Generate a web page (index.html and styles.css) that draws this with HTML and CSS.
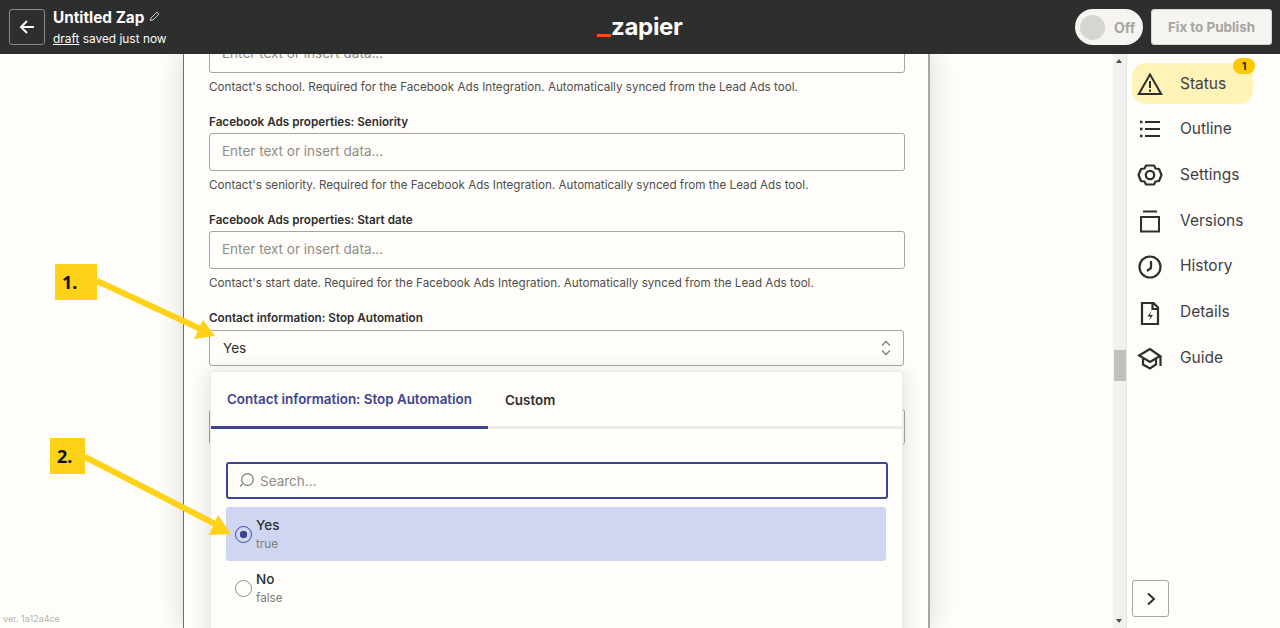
FILE: index.html
```html
<!DOCTYPE html>
<html lang="en">
  <head>
    <meta charset="UTF-8" />
    <meta name="viewport" content="width=device-width, initial-scale=1.0" />
    <title>Untitled Zap</title>
    <link rel="stylesheet" href="styles.css">
  </head>

  <body>
    <header class="topbar">
      <div class="topbar-left">
        <button class="back-btn">
          <svg width="18" height="18" viewBox="0 0 18 18" fill="none" stroke="#fffdf9" stroke-width="2"><path d="M16 9H3M9 3L3 9l6 6"/></svg>
        </button>
        <div class="zap-name">
          <div class="zap-title">Untitled Zap
            <svg width="12" height="12" viewBox="0 0 12 12" fill="none" stroke="#c9c7c2" stroke-width="1"><path d="M2 8l6-6 2 2-6 6-2.6.6z"/></svg>
          </div>
          <div class="zap-status"><u>draft</u> saved just now</div>
        </div>
      </div>
      <div class="logo"><span class="logo-bar"></span><span class="logo-text">zapier</span></div>
      <div class="topbar-right">
        <div class="toggle"><span class="knob"></span><span>Off</span></div>
        <button class="publish-btn">Fix to Publish</button>
      </div>
    </header>

    <main class="main">
      <div class="canvas">
        <section class="panel">
          <div class="fields">
            <div class="field">
              <div class="input placeholder">Enter text or insert data...</div>
              <p class="help">Contact's school. Required for the Facebook Ads Integration. Automatically synced from the Lead Ads tool.</p>
            </div>
            <div class="field">
              <label>Facebook Ads properties: Seniority</label>
              <div class="input placeholder">Enter text or insert data...</div>
              <p class="help">Contact's seniority. Required for the Facebook Ads Integration. Automatically synced from the Lead Ads tool.</p>
            </div>
            <div class="field">
              <label>Facebook Ads properties: Start date</label>
              <div class="input placeholder">Enter text or insert data...</div>
              <p class="help">Contact's start date. Required for the Facebook Ads Integration. Automatically synced from the Lead Ads tool.</p>
            </div>
            <div class="field select-field">
              <label>Contact information: Stop Automation</label>
              <div class="select">
                <span>Yes</span>
                <svg width="12" height="18" viewBox="0 0 12 18" fill="none" stroke="#8f8d88" stroke-width="1.6"><path d="M2 6.500l4-4 4 4M2 11.500l4 4 4-4"/></svg>
              </div>
            </div>
            <div class="input hidden-input"></div>
          </div>

          <div class="popover">
            <div class="tabs">
              <div class="tab active">Contact information: Stop Automation</div>
              <div class="tab">Custom</div>
            </div>
            <div class="popover-body">
              <div class="search">
                <svg width="20" height="20" viewBox="0 0 20 20" fill="none" stroke="#7d7b76" stroke-width="1.2"><circle cx="11.500" cy="8.500" r="5.800"/><path d="M6.500 13l-2.500 2.500"/></svg>
                <span>Search...</span>
              </div>
              <div class="option selected">
                <span class="radio"></span>
                <div><div class="option-name">Yes</div><div class="option-value">true</div></div>
              </div>
              <div class="option">
                <span class="radio"></span>
                <div><div class="option-name">No</div><div class="option-value">false</div></div>
              </div>
            </div>
          </div>
        </section>

        <div class="callout callout-one">1.</div>
        <div class="callout callout-two">2.</div>
        <svg class="arrows" width="1113" height="574" viewBox="0 54 1113 574" fill="#ffd21a">
          <path d="M97 281L205 331" stroke="#ffd21a" stroke-width="6"/>
          <path d="M203 320L215 336 194 339z"/>
          <path d="M85 457L221 527" stroke="#ffd21a" stroke-width="6"/>
          <path d="M218 515L231 534 209 535z"/>
        </svg>
        <span class="version">ver. 1a12a4ce</span>
      </div>

      <div class="scrollbar">
        <span class="arrow-up"></span>
        <span class="thumb"></span>
        <span class="arrow-down"></span>
      </div>

      <nav class="sidebar">
        <a class="nav-item status">
          <svg width="26" height="26" viewBox="0 0 26 26" fill="none" stroke="#2d2e2e" stroke-width="2"><path d="M13 3.500L1.800 23h22.400zM13 10v7M13 18.500v2.200"/></svg>
          <span>Status</span>
          <b class="badge">1</b>
        </a>
        <a class="nav-item">
          <svg width="26" height="26" viewBox="0 0 26 26" fill="none" stroke="#2d2e2e" stroke-width="2.200"><path d="M8 6h15M8 13h15M8 20h15"/><path d="M3 6h2.500M3 13h2.500M3 20h2.500" stroke-width="2.600"/></svg>
          <span>Outline</span>
        </a>
        <a class="nav-item">
          <svg width="26" height="26" viewBox="0 0 26 26" fill="none" stroke="#2d2e2e" stroke-width="2.200"><path d="M9 3.500h8l1.500 3 3.500.5 2.500 6-2.500 6-3.500.5-1.500 3H9l-1.500-3-3.500-.5L1.500 13 4 7l3.500-.5z" stroke-linejoin="round"/><circle cx="13" cy="13" r="4.200"/></svg>
          <span>Settings</span>
        </a>
        <a class="nav-item">
          <svg width="26" height="26" viewBox="0 0 26 26" fill="none" stroke="#2d2e2e" stroke-width="2"><path d="M6 3.500h14M3 9h20M4 9v15M22 9v15M3 23.500h20"/></svg>
          <span>Versions</span>
        </a>
        <a class="nav-item">
          <svg width="26" height="26" viewBox="0 0 26 26" fill="none" stroke="#2d2e2e" stroke-width="2.200"><circle cx="13" cy="13" r="10.500"/><path d="M14 7v7l-4 3"/></svg>
          <span>History</span>
        </a>
        <a class="nav-item">
          <svg width="26" height="26" viewBox="0 0 26 26" fill="none" stroke="#2d2e2e" stroke-width="2.200"><path d="M16.500 3H5v21h16V7.500zM15.500 3v6H21"/><path d="M14.500 11l-4 5.500h3l-1.500 4 4-5.500h-3z" fill="#2d2e2e" stroke="none"/></svg>
          <span>Details</span>
        </a>
        <a class="nav-item">
          <svg width="26" height="26" viewBox="0 0 26 26" fill="none" stroke="#2d2e2e" stroke-width="2.200"><path d="M13 4L2 10.500 13 17l10-6-10-7zM6 14v5.500l7 4 6-4V14M23.500 11v10"/></svg>
          <span>Guide</span>
        </a>
        <button class="collapse-btn">
          <svg width="14" height="14" viewBox="0 0 14 14" fill="none" stroke="#2d2e2e" stroke-width="2"><path d="M4 1.500L10 7l-6 5.500"/></svg>
        </button>
      </nav>
    </main>
  </body>
</html>
```

FILE: styles.css
```css
* {
  box-sizing: border-box;
}
html,
body {
  margin: 0;
  height: 100%;
  overflow: hidden;
}
body {
  font-family: Inter, "Liberation Sans", sans-serif;
  background-color: #fffdf9;
  color: #2d2e2e;
}
button {
  font-family: inherit;
  padding: 0;
}

/* top bar */
.topbar {
  height: 54px;
  display: grid;
  grid-template-columns: 1fr auto 1fr;
  align-items: center;
  padding: 0 8px 0 9px;
  background-color: #2d2e2e;
  color: #fffdf9;
}
.topbar-left {
  display: flex;
  align-items: center;
  gap: 8px;
}
.back-btn {
  width: 36px;
  height: 36px;
  display: flex;
  justify-content: center;
  align-items: center;
  background: none;
  border: 1.500px solid #8a8987;
  border-radius: 3px;
}
.zap-title {
  font-size: 15.300px;
  font-weight: 700;
  line-height: 20px;
  padding-top: 1px;
  display: flex;
  align-items: center;
  gap: 5px;
}
.zap-title svg {
  margin-bottom: 3px;
}
.zap-status {
  font-size: 11.900px;
  line-height: 18px;
  margin-top: 2px;
}
.logo {
  display: flex;
  align-items: flex-end;
  width: 87px;
  height: 30px;
}
.logo-bar {
  width: 14px;
  height: 3px;
  margin-bottom: 5px;
  background-color: #ff4f00;
}
.logo-text {
  font-size: 24px;
  font-weight: 700;
  line-height: 30px;
  letter-spacing: -0.3px;
}
.topbar-right {
  display: flex;
  justify-content: flex-end;
  gap: 8px;
}
.toggle {
  width: 68px;
  height: 36px;
  display: flex;
  align-items: center;
  gap: 9px;
  padding-left: 5px;
  border-radius: 18px;
  background-color: #f5f4f1;
  color: #a8a59f;
  font-size: 14px;
  font-weight: 700;
}
.knob {
  width: 25px;
  height: 25px;
  border-radius: 50%;
  background-color: #d7d5d0;
}
.publish-btn {
  width: 121px;
  height: 36px;
  border: 1px solid #d7d5d0;
  border-radius: 3px;
  background-color: #f5f4f1;
  color: #a8a59f;
  font-size: 13.400px;
  font-weight: 700;
}

/* main area */
.main {
  height: 574px;
  display: flex;
}
.canvas {
  position: relative;
  width: 1113px;
  overflow: hidden;
}
.panel {
  position: relative;
  display: flow-root;
  width: 747px;
  height: 574px;
  margin-left: 183px;
  padding: 0 23px 0 25px;
  background-color: #fffdf9;
  border-left: 1px solid #6f6e6b;
  border-right: 2px solid #a8a6a2;
  box-shadow: 0 0 24px rgba(45, 46, 46, 0.18);
}
.fields {
  margin-top: -19px;
}
.field {
  margin-bottom: 18px;
}
.field label {
  display: block;
  font-size: 11.700px;
  font-weight: 600;
  line-height: 16px;
  padding-top: 1px;
  margin-bottom: 3px;
  box-sizing: content-box;
}
.input {
  height: 38px;
  padding: 0 12px 2px;
  display: flex;
  align-items: center;
  border: 1px solid #a8a59f;
  border-radius: 3px;
  font-size: 13.500px;
  background-color: #fffdf9;
}
.placeholder {
  color: #8f8d88;
}
.help {
  margin: 7px 0 0;
  font-size: 11.670px;
  line-height: 15px;
  color: #504f4c;
}
.select-field {
  margin-bottom: 44px;
}
.select-field label {
  margin-bottom: 4px;
}
.select {
  width: 695px;
  height: 36px;
  padding: 0 11px 1px 13px;
  display: flex;
  justify-content: space-between;
  align-items: center;
  border: 1px solid #a8a59f;
  border-radius: 3px;
  font-size: 13.500px;
}
.hidden-input {
  width: 696px;
  height: 36px;
  margin-top: -1px;
}

/* dropdown over the form */
.popover {
  position: absolute;
  left: 26px;
  top: 317px;
  width: 693px;
  height: 280px;
  background-color: #fffdf9;
  border: 1px solid #ecebe8;
  border-radius: 3px;
  box-shadow: 0 2px 20px rgba(45, 46, 46, 0.16);
}
.tabs {
  display: flex;
  height: 57px;
  border-bottom: 3px solid #ecebe8;
}
.tab {
  height: 57px;
  padding: 0 17px 1px;
  display: flex;
  align-items: center;
  font-size: 13.400px;
  font-weight: 600;
  white-space: nowrap;
}
.tab.active {
  width: 277px;
  padding-left: 16px;
  color: #3d4592;
  border-bottom: 3px solid #3d4592;
}
.popover-body {
  padding: 33px 15px 0 15px;
}
.search {
  width: 662px;
  height: 37px;
  padding: 0 8px;
  display: flex;
  align-items: center;
  gap: 4px;
  border: 2px solid #3d4592;
  border-radius: 3px;
  font-size: 13.500px;
  color: #8f8d88;
}
.option {
  width: 660px;
  height: 54px;
  margin-top: 8px;
  padding-left: 9px;
  display: flex;
  align-items: center;
  gap: 4px;
  border-radius: 3px;
}
.option + .option {
  margin-top: 0;
}
.option.selected {
  background-color: #d0d6f2;
}
.radio {
  width: 17px;
  height: 17px;
  border-radius: 50%;
  border: 1.500px solid #8f8d88;
}
.selected .radio {
  border-color: #3d4592;
  background: radial-gradient(circle, #3d4592 0, #3d4592 3.500px, transparent 4px);
}
.option-name {
  font-size: 13.500px;
  font-weight: 500;
  line-height: 18px;
}
.option-value {
  font-size: 11.700px;
  line-height: 18px;
  margin-top: 1px;
  color: #7d7b76;
}

/* annotations drawn on top of the screenshot */
.callout {
  position: absolute;
  display: flex;
  align-items: center;
  font-family: "Noto Sans", sans-serif;
  font-size: 18px;
  font-weight: 700;
  color: #111;
  background-color: #ffd21a;
  padding-left: 7px;
}
.callout-one {
  left: 55px;
  top: 210px;
  width: 42px;
  height: 36px;
}
.callout-two {
  left: 50px;
  top: 384px;
  width: 35px;
  height: 36px;
}
.arrows {
  position: absolute;
  left: 0;
  top: 0;
  pointer-events: none;
}
.version {
  position: absolute;
  left: 3px;
  bottom: 4px;
  font-size: 9px;
  color: #b5b3ae;
}

/* scrollbar */
.scrollbar {
  position: relative;
  width: 14px;
  background-color: #f1f1f1;
  border-right: 1px solid #e8e7e4;
}
.thumb {
  position: absolute;
  left: 1px;
  top: 296px;
  width: 12px;
  height: 31px;
  background-color: #c1c1c1;
}
.arrow-up,
.arrow-down {
  position: absolute;
  left: 3px;
  width: 0;
  height: 0;
  border-left: 3.500px solid transparent;
  border-right: 3.500px solid transparent;
}
.arrow-up {
  top: 5px;
  border-bottom: 4px solid #505050;
}
.arrow-down {
  bottom: 5px;
  border-top: 4px solid #505050;
}

/* right sidebar */
.sidebar {
  position: relative;
  flex: 1;
  padding: 9.200px 27px 0 5px;
}
.nav-item {
  position: relative;
  height: 41px;
  margin-bottom: 4.800px;
  padding-left: 5px;
  display: flex;
  align-items: center;
  gap: 17px;
  font-size: 15.500px;
  border-radius: 14px;
  color: #3f4044;
}
.nav-item span {
  margin-bottom: 2px;
}
.nav-item.status {
  background-color: #fff3b8;
}
.nav-item.status span {
  margin-bottom: 0;
}
.badge {
  position: absolute;
  right: -2px;
  top: -5px;
  width: 22px;
  height: 16px;
  border-radius: 8px;
  background-color: #ffc800;
  color: #2d2e2e;
  font-size: 11px;
  line-height: 16px;
  text-align: center;
}
.collapse-btn {
  position: absolute;
  left: 5px;
  bottom: 11px;
  width: 37px;
  height: 37px;
  display: flex;
  justify-content: center;
  align-items: center;
  background: none;
  border: 1px solid #a8a59f;
  border-radius: 3px;
}
```
